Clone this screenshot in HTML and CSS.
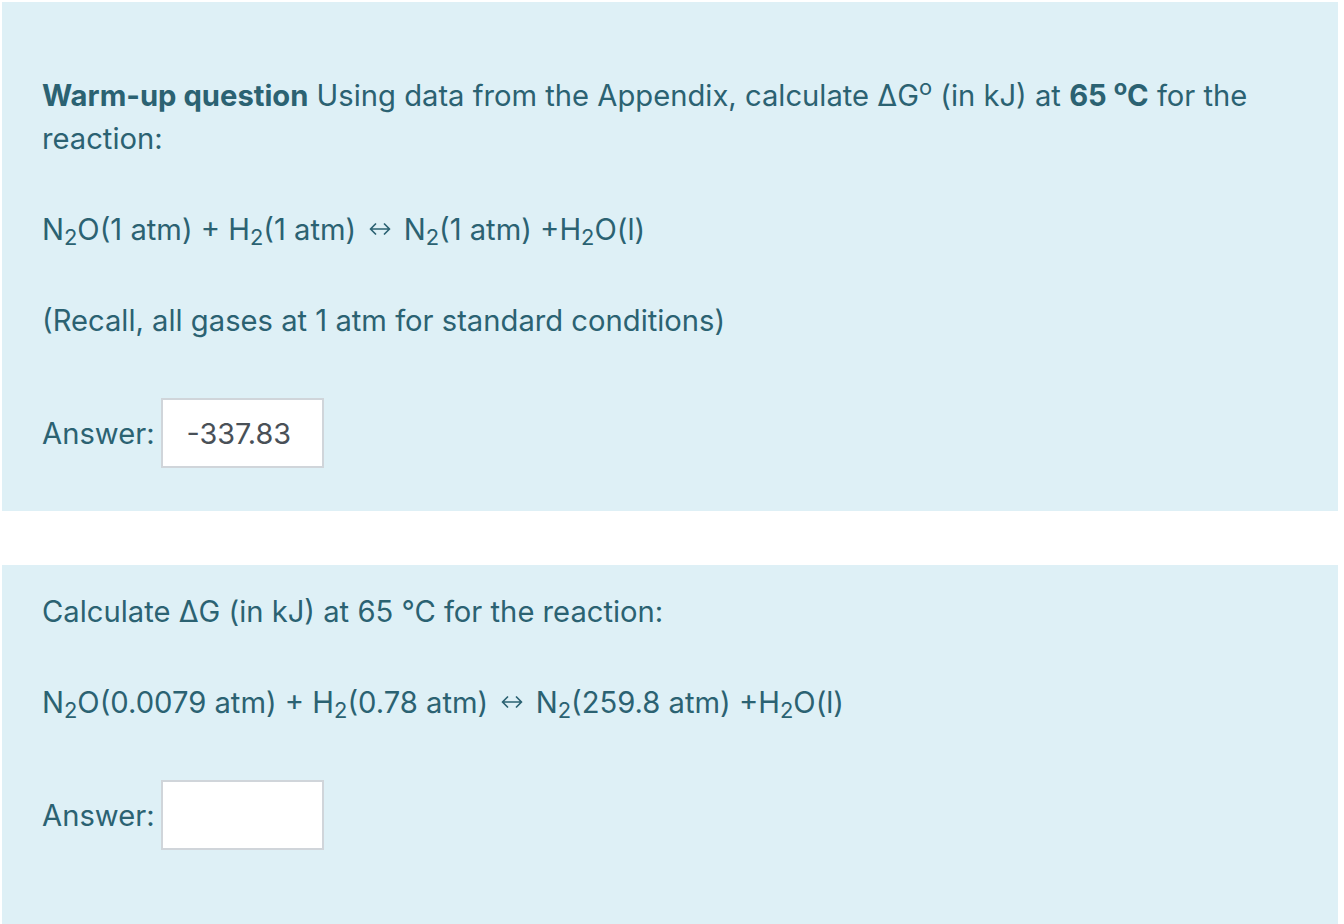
FILE: index.html
```html
<!DOCTYPE html>
<html lang="en">
<head>
    <meta charset="UTF-8">
    <title>Quiz | Free energy</title>
    <link rel="stylesheet" href="styles.css">
</head>
<body>

<div class="que que-first">
    <div class="qtext">
        <p><strong>Warm-up question</strong> Using data from the Appendix, calculate &Delta;G<sup>o</sup> (in kJ) at <strong>65 <sup>o</sup>C</strong> for the reaction:</p>
        <p>N<sub>2</sub>O(1 atm) + H<sub>2</sub>(1 atm) <svg class="arrow" viewBox="0 0 22 12"><path d="M1.5 6h19M6.5 1 1.5 6l5 5M15.5 1l5 5-5 5"/></svg> N<sub>2</sub>(1 atm) +H<sub>2</sub>O(l)</p>
        <p>(Recall, all gases at 1 atm for standard conditions)</p>
    </div>
    <div class="ablock">
        <label for="answer-1">Answer:</label>
        <input type="text" id="answer-1" value="-337.83">
    </div>
</div>

<div class="que">
    <div class="qtext">
        <p>Calculate &Delta;G (in kJ) at 65 &deg;C for the reaction:</p>
        <p>N<sub>2</sub>O(0.0079 atm) + H<sub>2</sub>(0.78 atm) <svg class="arrow" viewBox="0 0 22 12"><path d="M1.5 6h19M6.5 1 1.5 6l5 5M15.5 1l5 5-5 5"/></svg> N<sub>2</sub>(259.8 atm) +H<sub>2</sub>O(l)</p>
    </div>
    <div class="ablock">
        <label for="answer-2">Answer:</label>
        <input type="text" id="answer-2" value="">
    </div>
</div>

</body>
</html>
```

FILE: styles.css
```css
body {
    margin: 0;
    padding: 2px 6px 0 2px;
    background: #fff;
    font-family: 'Inter', 'Noto Sans', sans-serif;
    font-size: 29.2px;
    line-height: 43px;
    color: #2b6272;
}

.que {
    background-color: #def0f6;
    padding: 25px 40px 43px;
    margin-bottom: 54px;
}

.que:last-child {
    margin-bottom: 0;
    padding-bottom: 90px;
}

.que-first {
    padding-top: 72px; /* extra room above the warm-up question */
}

.qtext p {
    margin: 0 0 48px;
}

strong {
    font-weight: 700;
}

sup,
sub {
    font-size: 75%;
    line-height: 0;
    position: relative;
    vertical-align: baseline;
}

sup {
    top: -0.5em;
}

sub {
    bottom: -0.25em;
}

/* double arrow between the two sides of the reaction */
.arrow {
    width: 22px;
    height: 12px;
    vertical-align: 5px;
    margin: 0 4px 0 5px;
    fill: none;
    stroke: currentColor;
    stroke-width: 1.7;
    stroke-linecap: round;
    stroke-linejoin: round;
}

.ablock {
    display: flex;
    align-items: center;
    gap: 6px;
    margin-top: 56px;
}

.ablock input {
    box-sizing: border-box;
    width: 163px;
    height: 70px;
    padding: 0 24px;
    border: 2px solid #d0d5da;
    border-radius: 0;
    background: #fff;
    font-family: inherit;
    font-size: 28.8px;
    color: #495057;
    outline: none;
}
```
